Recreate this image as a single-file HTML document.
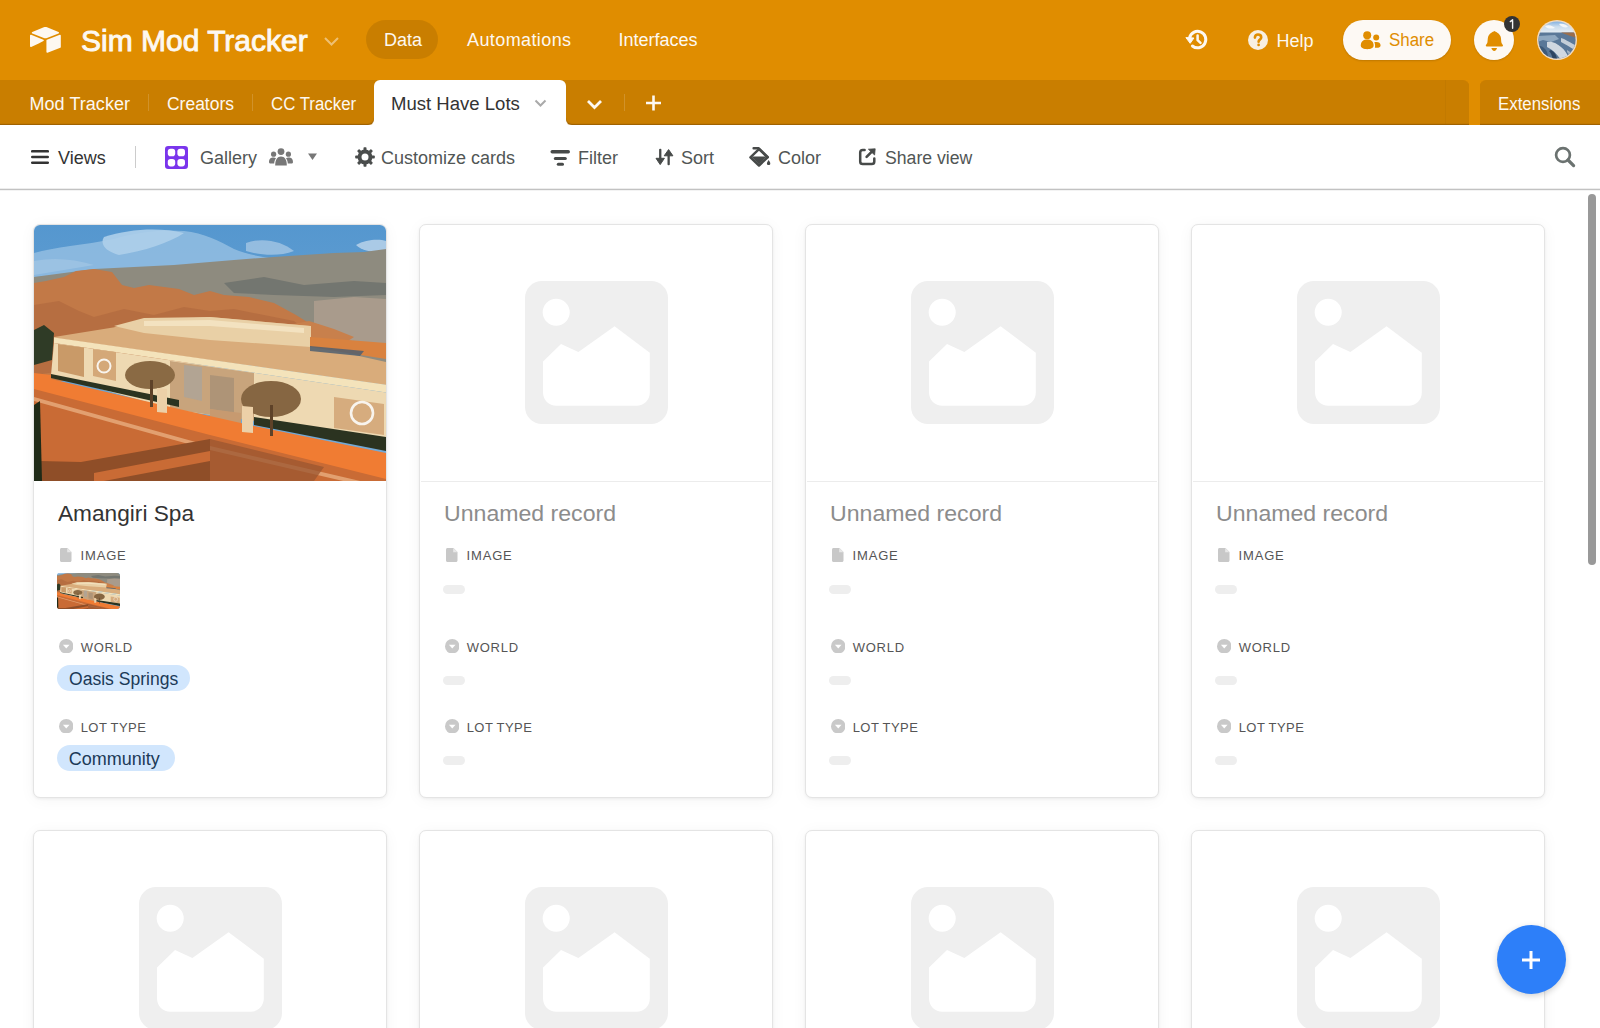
<!DOCTYPE html>
<html><head><meta charset="utf-8">
<style>
*{box-sizing:border-box;margin:0;padding:0}
html,body{width:1600px;height:1028px;overflow:hidden;background:#fff;font-family:"Liberation Sans",sans-serif}
.a{position:absolute}
.t{position:absolute;white-space:nowrap;line-height:1;font-family:"Liberation Sans",sans-serif}
.card{position:absolute;width:354px;background:#fff;border:1px solid #e4e4e4;border-radius:7px;box-shadow:0 1px 3px rgba(0,0,0,0.06),0 2px 16px rgba(0,0,0,0.045)}
</style></head><body>
<div class="a" style="left:0;top:0;width:1600px;height:80px;background:#e08d00"></div>
<svg class="a" style="left:30px;top:27px" width="31" height="26" viewBox="11 11 178 149">
<path fill="#fdf8f1" d="M90.039 12.368 24.079 39.66c-3.667 1.519-3.63 6.729.062 8.192l66.235 26.266a24.58 24.58 0 0 0 18.12 0l66.236-26.266c3.69-1.463 3.729-6.673.06-8.191l-65.958-27.293a24.58 24.58 0 0 0-18.795 0"/>
<path fill="#fdf8f1" d="M105.312 88.46v65.617c0 3.12 3.147 5.258 6.048 4.108l73.806-28.648a4.42 4.42 0 0 0 2.79-4.108V59.813c0-3.121-3.147-5.258-6.048-4.108l-73.806 28.648a4.42 4.42 0 0 0-2.79 4.108"/>
<path fill="#fdf8f1" d="m88.078 91.846-21.904 10.576-2.224 1.075-46.238 22.155c-2.93 1.414-6.672-.722-6.672-3.978V60.088c0-1.178.604-2.195 1.414-2.96a5 5 0 0 1 1.12-.84c1.104-.663 2.68-.84 4.02-.31L87.71 83.76c3.564 1.414 3.844 6.408.368 8.087"/>
</svg>
<div class="t" style="left:81px;top:25.60px;font-size:30px;color:#fdf8f1;font-weight:400;letter-spacing:0px;transform-origin:0 0;transform:scaleX(1.0);-webkit-text-stroke:0.9px #fdf8f1">Sim Mod Tracker</div>
<svg class="a" style="left:322px;top:34px" width="20" height="14"><polyline points="3,4 9.5,10.5 16,4" fill="none" stroke="rgba(255,255,255,0.45)" stroke-width="2"/></svg>
<div class="a" style="left:366px;top:20px;width:72px;height:39px;border-radius:20px;background:rgba(0,0,0,0.1)"></div>
<div class="t" style="left:384px;top:31.26px;font-size:18px;color:#fdf8f1;font-weight:400;letter-spacing:0px;">Data</div>
<div class="t" style="left:467px;top:31.26px;font-size:18px;color:#fdf8f1;font-weight:400;letter-spacing:0.4px;">Automations</div>
<div class="t" style="left:618.5px;top:31.26px;font-size:18px;color:#fdf8f1;font-weight:400;letter-spacing:0px;">Interfaces</div>
<svg class="a" style="left:1185px;top:28px" width="25" height="24" viewBox="0 0 25 24">
<path d="M7.44 17.97 A8.2 8.2 0 1 0 4.58 9.9" fill="none" stroke="#fdf8f1" stroke-width="3" stroke-linecap="round"/>
<path d="M0.9 9.6 L8.9 10 L5.2 15.3 Z" fill="#fdf8f1" stroke="#fdf8f1" stroke-width="1" stroke-linejoin="round"/>
<path d="M12.6 7.6 V12.2 L15.5 14.9" fill="none" stroke="#fdf8f1" stroke-width="2.5" stroke-linecap="round" stroke-linejoin="round"/>
</svg>
<svg class="a" style="left:1248px;top:29.5px" width="20" height="20" viewBox="0 0 20 20">
<circle cx="10" cy="10" r="10" fill="#f8efe1"/>
<path d="M6.9 7.6 C6.9 5.6 8.3 4.5 10 4.5 C11.8 4.5 13.2 5.7 13.2 7.4 C13.2 9.4 10.6 9.6 10.6 11.7" fill="none" stroke="#e08d00" stroke-width="2.6" stroke-linecap="round"/>
<circle cx="10.6" cy="14.9" r="1.35" fill="#e08d00"/>
</svg>
<div class="t" style="left:1276.5px;top:32.26px;font-size:18px;color:#fdf8f1;font-weight:400;letter-spacing:0px;">Help</div>
<div class="a" style="left:1343px;top:20px;width:108px;height:40px;border-radius:20px;background:#fdf9f4;box-shadow:0 1px 2px rgba(0,0,0,0.15)"></div>
<svg class="a" style="left:1360px;top:30px" width="22" height="20" viewBox="0 0 22 20">
<circle cx="7.2" cy="5.2" r="4" fill="#e08d00"/>
<path d="M0.8 15.6 C0.8 11.3 3.6 9.6 7.2 9.6 C10.8 9.6 13.6 11.3 13.6 15.6 C13.6 18.4 10.4 19.2 7.2 19.2 C4 19.2 0.8 18.4 0.8 15.6 Z" fill="#e08d00"/>
<circle cx="16.2" cy="7.6" r="3" fill="#e08d00"/>
<path d="M14.3 12.2 C17.6 11.3 20.6 12.4 20.6 15.2 C20.6 17 19 17.8 16.6 17.8 L14.9 17.8 C15.3 16 15.1 13.7 14.3 12.2 Z" fill="#e08d00"/>
</svg>
<div class="t" style="left:1389px;top:31.36px;font-size:18px;color:#e08d00;font-weight:400;letter-spacing:0px;transform-origin:0 0;transform:scaleX(0.94)">Share</div>
<div class="a" style="left:1474px;top:20px;width:40px;height:40px;border-radius:20px;background:#fdf9f4;box-shadow:0 1px 2px rgba(0,0,0,0.12)"></div>
<svg class="a" style="left:1484px;top:30px" width="20" height="22" viewBox="0 0 20 22">
<path d="M10.4 0.9 C12 2 15.5 3 16.6 6.5 C17.2 8.6 17.1 11 17.4 12.4 C17.8 13.8 19 14.6 19 15.4 C19 16.2 18.4 16.5 17.6 16.5 H3.2 C2.4 16.5 1.8 16.2 1.8 15.4 C1.8 14.6 3 13.8 3.4 12.4 C3.7 11 3.6 8.6 4.2 6.5 C5.3 3 8.8 2 10.4 0.9 Z" fill="#e08d00"/>
<path d="M7.4 18 H13 C12.6 19.8 11.6 20.9 10.2 20.9 C8.8 20.9 7.8 19.8 7.4 18 Z" fill="#e08d00"/>
</svg>
<svg class="a" style="left:1503.5px;top:16px" width="16" height="16" viewBox="0 0 16 16"><circle cx="8" cy="8" r="8" fill="#333"/><path d="M8.6 3.8 V12.2 M8.6 3.9 L6.3 5.6" fill="none" stroke="#f4f4f4" stroke-width="1.4" stroke-linecap="round" stroke-linejoin="round"/></svg>
<svg class="a" style="left:1537px;top:20px" width="40" height="40" viewBox="0 0 40 40">
<defs><clipPath id="av"><circle cx="20" cy="20" r="18.6"/></clipPath>
<linearGradient id="avsky" x1="0" y1="0" x2="0" y2="1"><stop offset="0" stop-color="#6fa3dc"/><stop offset="0.5" stop-color="#c9dced"/><stop offset="1" stop-color="#e8eef2"/></linearGradient></defs>
<circle cx="20" cy="20" r="20" fill="#f3dcc0"/>
<g clip-path="url(#av)">
<rect x="0" y="0" width="40" height="13" fill="url(#avsky)"/>
<path d="M8 6 C12 4 16 6 18 8 C14 9 10 9 8 6 Z M22 4 C26 3 30 5 31 7 C28 8 24 7 22 4 Z" fill="#f4f6f8"/>
<rect x="0" y="12.5" width="40" height="28" fill="#5a7898"/>
<path d="M24 12.5 L40 12.5 L40 18 L32 15.5 Z" fill="#9b6e4c"/>
<path d="M0 16 L18 15 L22 19 L14 22 L6 20 L0 22 Z" fill="#8fa8c0"/>
<path d="M10 22 C16 21 20 24 24 27 C28 30 30 34 33 40 L24 40 C20 34 16 30 10 27 Z" fill="#d0d8e0"/>
<path d="M24 18 C28 19 32 22 36 24 L40 26 L40 31 C34 28 28 24 24 22 Z" fill="#c4ced8"/>
<path d="M0 26 C4 25 8 28 10 32 L12 40 L0 40 Z" fill="#3e5a78"/>
<path d="M14 30 C18 32 20 36 20 40 L16 40 C15 36 14 33 12 31 Z" fill="#2c4462"/>
<path d="M30 30 C34 32 36 35 37 40 L34 40 C33 36 32 34 30 32 Z" fill="#9fb0c0"/>
</g>
</svg>
<div class="a" style="left:0;top:80px;width:1600px;height:45px;background:#e08d00"></div>
<div class="a" style="left:360px;top:110px;width:220px;height:15px;background:#fff"></div>
<div class="a" style="left:0;top:80px;width:374px;height:45px;background:#c97e00;border-bottom-right-radius:6px;box-shadow:inset 0 -1px 0 rgba(90,50,0,0.32),inset 0 -2px 0 rgba(90,50,0,0.06),0 1px 0 rgba(175,105,0,0.35)"></div>
<div class="a" style="left:566px;top:80px;width:903px;height:45px;background:#c97e00;border-radius:0 6px 0 6px;box-shadow:inset 0 -1px 0 rgba(90,50,0,0.32),inset 0 -2px 0 rgba(90,50,0,0.06),0 1px 0 rgba(175,105,0,0.35)"></div>
<div class="a" style="left:370px;top:80px;width:200px;height:12px;background:#c97e00"></div>
<div class="a" style="left:1480px;top:80px;width:120px;height:45px;background:#c97e00;border-top-left-radius:6px;box-shadow:inset 0 -1px 0 rgba(90,50,0,0.32),inset 0 -2px 0 rgba(90,50,0,0.06),0 1px 0 rgba(175,105,0,0.35)"></div>
<div class="a" style="left:1445px;top:80px;width:1px;height:44px;background:rgba(0,0,0,0.03)"></div>
<div class="t" style="left:29.5px;top:95.36px;font-size:18px;color:#fdf8f1;font-weight:400;letter-spacing:0.05px;">Mod Tracker</div>
<div class="a" style="left:148px;top:94px;width:1px;height:17px;background:rgba(255,255,255,0.16)"></div>
<div class="t" style="left:166.7px;top:95.36px;font-size:18px;color:#fdf8f1;font-weight:400;letter-spacing:0px;transform-origin:0 0;transform:scaleX(0.97)">Creators</div>
<div class="a" style="left:252px;top:94px;width:1px;height:17px;background:rgba(255,255,255,0.16)"></div>
<div class="t" style="left:270.6px;top:95.36px;font-size:18px;color:#fdf8f1;font-weight:400;letter-spacing:0px;transform-origin:0 0;transform:scaleX(0.935)">CC Tracker</div>
<div class="a" style="left:374px;top:80px;width:192px;height:46px;background:#fff;border-radius:6px 6px 0 0"></div>
<div class="t" style="left:391px;top:95.26px;font-size:18px;color:#333333;font-weight:400;letter-spacing:0px;transform-origin:0 0;transform:scaleX(1.03)">Must Have Lots</div>
<svg class="a" style="left:532px;top:96px" width="17" height="14"><polyline points="3.5,4.5 8.5,9.5 13.5,4.5" fill="none" stroke="#aaaaaa" stroke-width="2"/></svg>
<svg class="a" style="left:584px;top:96px" width="21" height="16"><polyline points="4,5 10.5,11.5 17,5" fill="none" stroke="#fdf8f1" stroke-width="2.8"/></svg>
<div class="a" style="left:624px;top:94px;width:1px;height:17px;background:rgba(255,255,255,0.16)"></div>
<svg class="a" style="left:644px;top:94px" width="19" height="18"><path d="M9.5 1.5 V16.5 M2 9 H17" fill="none" stroke="#fdf8f1" stroke-width="2.6"/></svg>
<div class="t" style="left:1497.6px;top:95.36px;font-size:18px;color:#fdf8f1;font-weight:400;letter-spacing:0px;transform-origin:0 0;transform:scaleX(0.935)">Extensions</div>
<div class="a" style="left:0;top:125px;width:1600px;height:63px;background:#fff"></div>
<div class="a" style="left:0;top:188px;width:1600px;height:1px;background:#ededed"></div>
<div class="a" style="left:0;top:189px;width:1600px;height:1px;background:#c2c2c2"></div>
<svg class="a" style="left:31px;top:150px" width="18" height="14"><rect x="0" y="0" width="18" height="2.6" rx="1.2" fill="#333"/><rect x="0" y="5.7" width="18" height="2.6" rx="1.2" fill="#333"/><rect x="0" y="11.4" width="18" height="2.6" rx="1.2" fill="#333"/></svg>
<div class="t" style="left:58px;top:149.26px;font-size:18px;color:#333333;font-weight:400;letter-spacing:0px;">Views</div>
<div class="a" style="left:134.5px;top:146px;width:1.5px;height:22px;background:#cccccc"></div>
<svg class="a" style="left:165px;top:145.5px" width="23" height="23" viewBox="0 0 23 23">
<rect x="0" y="0" width="23" height="23" rx="3.2" fill="#7a35ec"/>
<rect x="2.8" y="2.8" width="7.4" height="7.4" rx="2.8" fill="#fff"/><rect x="12.4" y="2.8" width="7.6" height="7.4" rx="2.8" fill="#fff"/>
<rect x="2.8" y="12.9" width="7.4" height="7.5" rx="2.8" fill="#fff"/><rect x="12.4" y="12.9" width="7.6" height="7.5" rx="2.8" fill="#fff"/>
</svg>
<div class="t" style="left:200px;top:149.26px;font-size:18px;color:#515655;font-weight:400;letter-spacing:0px;">Gallery</div>
<svg class="a" style="left:269px;top:148px" width="24" height="18" viewBox="0 0 24 18">
<circle cx="12" cy="3.6" r="3.4" fill="#777"/>
<circle cx="4.6" cy="6.2" r="2.6" fill="#777"/><circle cx="19.4" cy="6.2" r="2.6" fill="#777"/>
<path d="M6.2 17.6 C6.2 11.4 8.4 8.6 12 8.6 C15.6 8.6 17.8 11.4 17.8 17.6 Z" fill="#777"/>
<path d="M0 14.6 C0 10.8 1.8 9.6 4.6 9.6 C5.6 9.6 6.4 9.8 7 10.2 C5.8 11.6 5.3 13.6 5.2 15.4 L0.8 15.4 Z" fill="#777"/>
<path d="M24 14.6 C24 10.8 22.2 9.6 19.4 9.6 C18.4 9.6 17.6 9.8 17 10.2 C18.2 11.6 18.7 13.6 18.8 15.4 L23.2 15.4 Z" fill="#777"/>
</svg>
<svg class="a" style="left:307px;top:152px" width="11" height="9"><path d="M1 1.5 H10 L5.5 8 Z" fill="#777"/></svg>
<svg class="a" style="left:354.5px;top:146.5px" width="20" height="20" viewBox="0 0 20 20">
<g fill="#4a4d4c" transform="translate(10 10)">
<circle r="7.4"/>
<rect x="-1.5" y="-9.8" width="3" height="19.6" rx="0.8"/>
<rect x="-1.5" y="-9.8" width="3" height="19.6" rx="0.8" transform="rotate(45)"/>
<rect x="-1.5" y="-9.8" width="3" height="19.6" rx="0.8" transform="rotate(90)"/>
<rect x="-1.5" y="-9.8" width="3" height="19.6" rx="0.8" transform="rotate(135)"/>
</g>
<circle cx="10" cy="10" r="3.5" fill="#fff"/>
</svg>
<div class="t" style="left:381px;top:149.26px;font-size:18px;color:#515655;font-weight:400;letter-spacing:0px;">Customize cards</div>
<svg class="a" style="left:548px;top:147px" width="25" height="21" viewBox="548 147 25 21">
<rect x="550.5" y="150.1" width="19.5" height="3.4" rx="1.7" fill="#474a49"/>
<rect x="553.8" y="157" width="13" height="3" rx="1.5" fill="#474a49"/>
<rect x="556.8" y="162.8" width="7.2" height="3" rx="1.5" fill="#474a49"/>
</svg>
<div class="t" style="left:578px;top:149.26px;font-size:18px;color:#515655;font-weight:400;letter-spacing:0px;">Filter</div>
<svg class="a" style="left:650px;top:146px" width="26" height="22" viewBox="650 146 26 22">
<rect x="659.1" y="148.8" width="2.3" height="11" rx="1" fill="#474a49"/>
<path d="M656 158.3 L664.4 158.3 L660.2 164.6 Z" fill="#474a49" stroke="#474a49" stroke-width="1" stroke-linejoin="round"/>
<rect x="667.5" y="154" width="2.3" height="11.3" rx="1" fill="#474a49"/>
<path d="M664.2 155.8 L672.9 155.8 L668.6 149.6 Z" fill="#474a49" stroke="#474a49" stroke-width="1" stroke-linejoin="round"/>
</svg>
<div class="t" style="left:681px;top:149.26px;font-size:18px;color:#515655;font-weight:400;letter-spacing:0px;">Sort</div>
<svg class="a" style="left:745px;top:142px" width="30" height="28" viewBox="745 142 30 28">
<path d="M759 149.2 L767.6 157.3 L759 165.6 L750.4 157.3 Z" fill="none" stroke="#474a49" stroke-width="2.4" stroke-linejoin="round"/>
<path d="M751.2 156.6 L766.8 156.6 L759 164.6 Z" fill="#474a49"/>
<path d="M753.6 148.3 H758.8 L767.8 157.2" fill="none" stroke="#474a49" stroke-width="2.4" stroke-linecap="round" stroke-linejoin="round"/>
<path d="M768.6 160 C769.6 161.4 770.3 162.5 770.3 163.4 C770.3 164.4 769.5 165.1 768.6 165.1 C767.7 165.1 766.9 164.4 766.9 163.4 C766.9 162.5 767.6 161.4 768.6 160 Z" fill="#474a49"/>
</svg>
<div class="t" style="left:778px;top:149.26px;font-size:18px;color:#515655;font-weight:400;letter-spacing:0px;">Color</div>
<svg class="a" style="left:855px;top:142px" width="27" height="28" viewBox="855 142 27 28">
<path d="M864.6 149.9 H862.8 C861.3 149.9 860.2 151 860.2 152.5 V161.5 C860.2 163 861.3 164.1 862.8 164.1 H871.7 C873.2 164.1 874.3 163 874.3 161.5 V158.4" fill="none" stroke="#474a49" stroke-width="2.5" stroke-linecap="round"/>
<path d="M866.6 156.8 L872.6 150.8" stroke="#474a49" stroke-width="2.6" stroke-linecap="round"/>
<path d="M868.4 149.2 L875.2 148.8 L874.6 155 Z" fill="#474a49" stroke="#474a49" stroke-width="0.8" stroke-linejoin="round"/>
</svg>
<div class="t" style="left:885px;top:149.26px;font-size:18px;color:#515655;font-weight:400;letter-spacing:0px;transform-origin:0 0;transform:scaleX(0.98)">Share view</div>
<svg class="a" style="left:1552px;top:144px" width="25" height="25" viewBox="0 0 25 25">
<circle cx="11" cy="11" r="6.9" fill="none" stroke="#6b7270" stroke-width="2.7"/>
<path d="M16 16 L21.6 21.6" stroke="#6b7270" stroke-width="3.2" stroke-linecap="round"/>
</svg>
<div class="a" style="left:0;top:190px;width:1600px;height:838px;background:#ffffff"></div>
<div class="a" style="left:0;top:190px;width:1600px;height:1px;background:#f3f3f3"></div>
<div class="card" style="left:33px;top:224px;height:574px"></div>
<div class="a" style="left:34px;top:225px;width:352px;height:256px;border-radius:6px 6px 0 0;overflow:hidden"><svg width="352" height="256" viewBox="0 0 352 256" preserveAspectRatio="none" style="display:block">
<defs>
<linearGradient id="sky" x1="0" y1="0" x2="0" y2="1"><stop offset="0" stop-color="#5597cf"/><stop offset="1" stop-color="#78acd6"/></linearGradient>
</defs>
<rect width="352" height="256" fill="url(#sky)"/>
<path d="M0 28 C20 22 50 20 80 14 C100 8 125 4 150 6 C170 8 185 16 200 24 C215 30 235 34 250 34 L260 40 L0 52 Z" fill="#8fbbe0" opacity="0.9"/>
<path d="M70 12 C95 4 125 2 150 8 C135 18 110 26 85 30 C70 26 66 18 70 12 Z" fill="#aecfea" opacity="0.9"/>
<path d="M0 36 C20 32 40 34 60 40 L0 50 Z" fill="#9fc4e4" opacity="0.8"/>
<path d="M212 18 C228 12 248 16 260 26 C245 32 225 30 212 26 Z" fill="#a4c6e4" opacity="0.8"/>
<path d="M322 20 C332 14 346 14 352 16 L352 27 C340 28 328 26 322 20 Z" fill="#b8d2ea" opacity="0.85"/>
<path d="M0 52 L30 48 L60 44 L100 42 L140 40 L176 37 L200 35 L240 32 L270 30 L300 28 L330 27 L352 24 L352 140 L0 140 Z" fill="#8e8b7f"/>
<path d="M190 58 L230 52 L270 60 L320 56 L352 58 L352 70 L300 72 L240 70 L200 68 Z" fill="#737670"/>
<path d="M280 76 L320 72 L352 74 L352 130 L280 130 Z" fill="#a99b8c"/>
<path d="M0 58 L12 56 L30 52 L42 46 L60 44 L78 47 L88 60 L100 63 L115 60 L130 62 L145 64 L160 70 L176 66 L190 70 L215 72 L240 78 L262 90 L278 100 L290 118 L0 160 Z" fill="#c27947"/>
<path d="M0 80 L25 76 L45 86 L60 92 L90 84 L120 90 L150 82 L176 86 L200 84 L230 90 L260 96 L280 112 L0 150 Z" fill="#b06a3e" opacity="0.7"/>
<path d="M255 100 L275 96 L300 104 L320 112 L300 125 L255 125 Z" fill="#c8804c"/>
<path d="M0 105 L10 100 L20 108 L18 135 L0 140 Z" fill="#2f3b26"/>
<path d="M20 112 L79 102.5 L110 96 L176 92 L276 101 L276 120 L352 137 L352 160 L20 113 Z" fill="#d9ac7b"/>
<path d="M80 101 L110 93 L176 92 L277 101 L277 122 L176 115 L110 108 Z" fill="#e9d0a6"/>
<path d="M110 96 L176 95 L270 103 L270 108 L176 101 L110 101 Z" fill="#f3e2c0"/>
<path d="M276 112 L352 118 L352 134 L276 122 Z" fill="#d9823f"/><path d="M276 121 L330 126 L326 131 L276 126 Z" fill="#4f5f70" opacity="0.85"/>
<path d="M20 112.4 L352 159.7 L352 167.4 L20 117.9 Z" fill="#f4e3bb"/>
<path d="M20 117.9 L352 167.4 L352 215 L220 195 L145 186 L17 150 Z" fill="#eed9b2"/>
<path d="M24 119 L50 122.5 L50 152 L24 146 Z" fill="#c99a68"/>
<path d="M59 124 L82 127 L82 156 L59 151 Z" fill="#d4a878"/>
<path d="M136 136 L220 148 L220 196 L136 184 Z" fill="#c8a47c"/><path d="M150 140 L168 142 L168 176 L150 172 Z" fill="#a8a49c" opacity="0.7"/><path d="M176 150 L200 153 L200 188 L176 184 Z" fill="#9c8a74" opacity="0.6"/>
<path d="M300 172 L350 179 L350 210 L300 203 Z" fill="#d6ac7e"/>
<path d="M176 184 L207 188 L207 210 L176 206 Z" fill="#c79a70"/>
<path d="M17 149 L145 175 L145 182 L17 153 Z" fill="#2b3320"/>
<path d="M220 192 L352 212 L352 226 L220 200 Z" fill="#2b3320"/>
<path d="M0 148 L17 150 L17 154 L145 184 L220 201 L352 228 L352 256 L0 256 Z" fill="#f07c33"/>
<path d="M0 164 L176 210 L352 254 L352 256 L0 256 Z" fill="#c96b35"/>
<path d="M0 172 L176 221 L352 262 L352 266 L176 225 L0 176 Z" fill="#e2a070"/>
<path d="M6 236 L47 237 L176 214 L176 256 L6 256 Z" fill="#8f4e28"/>
<path d="M60 248 L176 226 L176 236 L70 256 L60 256 Z" fill="#c96b35"/>
<path d="M176 214 L290 242 L280 256 L176 256 Z" fill="#9a5630" opacity="0.75"/>
<path d="M0 180 L6 176 L8 256 L0 256 Z" fill="#1f2a17"/>
<ellipse cx="116" cy="150" rx="25" ry="14" fill="#8a6a44"/>
<path d="M116 155 L119 155 L119 182 L116 182 Z" fill="#5e4228"/>
<ellipse cx="237" cy="174" rx="30" ry="18" fill="#866642"/>
<path d="M236 180 L239 180 L239 211 L236 211 Z" fill="#5e4228"/>
<path d="M123 163 L133 164 L133 188 L123 187 Z" fill="#ecd0a8"/>
<path d="M208 181 L219 182 L219 208 L208 207 Z" fill="#ecd0a8"/>
<circle cx="70" cy="141" r="6.5" fill="none" stroke="#f8f4ee" stroke-width="2"/>
<circle cx="328" cy="188" r="11" fill="none" stroke="#f8f4ee" stroke-width="2.6"/>
</svg></div>
<div class="t" style="left:57.5px;top:502.58px;font-size:22px;color:#333333;font-weight:400;letter-spacing:0px;transform-origin:0 0;transform:scaleX(1.03)">Amangiri Spa</div>
<svg class="a" style="left:60px;top:547.5px" width="12" height="14" viewBox="0 0 12 14"><path d="M1.5 0 H7.5 L11.5 4 V12.5 C11.5 13.3 10.8 14 10 14 H1.5 C0.7 14 0 13.3 0 12.5 V1.5 C0 0.7 0.7 0 1.5 0 Z" fill="#c8c8c8"/><path d="M7.2 0 V4.3 H11.5" fill="#e8e8e8"/></svg>
<div class="t" style="left:80.5px;top:549.00px;font-size:13px;color:#555555;font-weight:400;letter-spacing:0.85px;">IMAGE</div>
<svg class="a" style="left:58.6px;top:638.7px" width="14.5" height="14.5" viewBox="0 0 14 14"><circle cx="7" cy="7" r="7" fill="#c9c9c9"/><path d="M3.8 5.6 H10.2 L7 9.2 Z" fill="#fff"/></svg>
<div class="t" style="left:80.7px;top:640.70px;font-size:13px;color:#555555;font-weight:400;letter-spacing:0.75px;">WORLD</div>
<svg class="a" style="left:58.6px;top:718.7px" width="14.5" height="14.5" viewBox="0 0 14 14"><circle cx="7" cy="7" r="7" fill="#c9c9c9"/><path d="M3.8 5.6 H10.2 L7 9.2 Z" fill="#fff"/></svg>
<div class="t" style="left:80.7px;top:720.60px;font-size:13px;color:#555555;font-weight:400;letter-spacing:0.45px;word-spacing:-0.3px">LOT TYPE</div>
<div class="a" style="left:57px;top:573.4px;width:63px;height:35.4px;border-radius:3px;overflow:hidden"><svg width="63" height="35.4" viewBox="0 40 352 200" preserveAspectRatio="xMidYMid slice" style="display:block">
<defs>
<linearGradient id="sky2" x1="0" y1="0" x2="0" y2="1"><stop offset="0" stop-color="#5597cf"/><stop offset="1" stop-color="#78acd6"/></linearGradient>
</defs>
<rect width="352" height="256" fill="url(#sky2)"/>
<path d="M0 28 C20 22 50 20 80 14 C100 8 125 4 150 6 C170 8 185 16 200 24 C215 30 235 34 250 34 L260 40 L0 52 Z" fill="#8fbbe0" opacity="0.9"/>
<path d="M70 12 C95 4 125 2 150 8 C135 18 110 26 85 30 C70 26 66 18 70 12 Z" fill="#aecfea" opacity="0.9"/>
<path d="M0 36 C20 32 40 34 60 40 L0 50 Z" fill="#9fc4e4" opacity="0.8"/>
<path d="M212 18 C228 12 248 16 260 26 C245 32 225 30 212 26 Z" fill="#a4c6e4" opacity="0.8"/>
<path d="M322 20 C332 14 346 14 352 16 L352 27 C340 28 328 26 322 20 Z" fill="#b8d2ea" opacity="0.85"/>
<path d="M0 52 L30 48 L60 44 L100 42 L140 40 L176 37 L200 35 L240 32 L270 30 L300 28 L330 27 L352 24 L352 140 L0 140 Z" fill="#8e8b7f"/>
<path d="M190 58 L230 52 L270 60 L320 56 L352 58 L352 70 L300 72 L240 70 L200 68 Z" fill="#737670"/>
<path d="M280 76 L320 72 L352 74 L352 130 L280 130 Z" fill="#a99b8c"/>
<path d="M0 58 L12 56 L30 52 L42 46 L60 44 L78 47 L88 60 L100 63 L115 60 L130 62 L145 64 L160 70 L176 66 L190 70 L215 72 L240 78 L262 90 L278 100 L290 118 L0 160 Z" fill="#c27947"/>
<path d="M0 80 L25 76 L45 86 L60 92 L90 84 L120 90 L150 82 L176 86 L200 84 L230 90 L260 96 L280 112 L0 150 Z" fill="#b06a3e" opacity="0.7"/>
<path d="M255 100 L275 96 L300 104 L320 112 L300 125 L255 125 Z" fill="#c8804c"/>
<path d="M0 105 L10 100 L20 108 L18 135 L0 140 Z" fill="#2f3b26"/>
<path d="M20 112 L79 102.5 L110 96 L176 92 L276 101 L276 120 L352 137 L352 160 L20 113 Z" fill="#d9ac7b"/>
<path d="M80 101 L110 93 L176 92 L277 101 L277 122 L176 115 L110 108 Z" fill="#e9d0a6"/>
<path d="M110 96 L176 95 L270 103 L270 108 L176 101 L110 101 Z" fill="#f3e2c0"/>
<path d="M276 112 L352 118 L352 134 L276 122 Z" fill="#d9823f"/><path d="M276 121 L330 126 L326 131 L276 126 Z" fill="#4f5f70" opacity="0.85"/>
<path d="M20 112.4 L352 159.7 L352 167.4 L20 117.9 Z" fill="#f4e3bb"/>
<path d="M20 117.9 L352 167.4 L352 215 L220 195 L145 186 L17 150 Z" fill="#eed9b2"/>
<path d="M24 119 L50 122.5 L50 152 L24 146 Z" fill="#c99a68"/>
<path d="M59 124 L82 127 L82 156 L59 151 Z" fill="#d4a878"/>
<path d="M136 136 L220 148 L220 196 L136 184 Z" fill="#c8a47c"/><path d="M150 140 L168 142 L168 176 L150 172 Z" fill="#a8a49c" opacity="0.7"/><path d="M176 150 L200 153 L200 188 L176 184 Z" fill="#9c8a74" opacity="0.6"/>
<path d="M300 172 L350 179 L350 210 L300 203 Z" fill="#d6ac7e"/>
<path d="M176 184 L207 188 L207 210 L176 206 Z" fill="#c79a70"/>
<path d="M17 149 L145 175 L145 182 L17 153 Z" fill="#2b3320"/>
<path d="M220 192 L352 212 L352 226 L220 200 Z" fill="#2b3320"/>
<path d="M0 148 L17 150 L17 154 L145 184 L220 201 L352 228 L352 256 L0 256 Z" fill="#f07c33"/>
<path d="M0 164 L176 210 L352 254 L352 256 L0 256 Z" fill="#c96b35"/>
<path d="M0 172 L176 221 L352 262 L352 266 L176 225 L0 176 Z" fill="#e2a070"/>
<path d="M6 236 L47 237 L176 214 L176 256 L6 256 Z" fill="#8f4e28"/>
<path d="M60 248 L176 226 L176 236 L70 256 L60 256 Z" fill="#c96b35"/>
<path d="M176 214 L290 242 L280 256 L176 256 Z" fill="#9a5630" opacity="0.75"/>
<path d="M0 180 L6 176 L8 256 L0 256 Z" fill="#1f2a17"/>
<ellipse cx="116" cy="150" rx="25" ry="14" fill="#8a6a44"/>
<path d="M116 155 L119 155 L119 182 L116 182 Z" fill="#5e4228"/>
<ellipse cx="237" cy="174" rx="30" ry="18" fill="#866642"/>
<path d="M236 180 L239 180 L239 211 L236 211 Z" fill="#5e4228"/>
<path d="M123 163 L133 164 L133 188 L123 187 Z" fill="#ecd0a8"/>
<path d="M208 181 L219 182 L219 208 L208 207 Z" fill="#ecd0a8"/>
<circle cx="70" cy="141" r="6.5" fill="none" stroke="#f8f4ee" stroke-width="2"/>
<circle cx="328" cy="188" r="11" fill="none" stroke="#f8f4ee" stroke-width="2.6"/>
</svg></div>
<div class="a" style="left:57px;top:665px;width:133px;height:26px;border-radius:13px;background:#d1e6fd"></div>
<div class="t" style="left:68.8px;top:670.36px;font-size:18px;color:#1c3a57;font-weight:400;letter-spacing:0px;transform-origin:0 0;transform:scaleX(0.975)">Oasis Springs</div>
<div class="a" style="left:57px;top:745px;width:118px;height:26px;border-radius:13px;background:#d1e6fd"></div>
<div class="t" style="left:68.8px;top:750.36px;font-size:18px;color:#1c3a57;font-weight:400;letter-spacing:0px;">Community</div>
<div class="card" style="left:419px;top:224px;height:574px"></div>
<svg class="a" style="left:525px;top:281px" width="143" height="143" viewBox="0 0 143 143">
<rect width="143" height="143" rx="17" fill="#efefef"/>
<circle cx="31.2" cy="31.2" r="13.5" fill="#fff"/>
<path d="M18 80.4 L36 62.9 L53.4 70.9 L89.6 45.2 L124.8 71.7 V111.5 C124.8 118.8 119 124.8 111.5 124.8 H31.3 C24 124.8 18 118.8 18 111.5 Z" fill="#fff"/>
</svg>
<div class="a" style="left:421px;top:480.5px;width:350px;height:1px;background:#ececec"></div>
<div class="t" style="left:444.2px;top:502.58px;font-size:22px;color:#8c8c8c;font-weight:400;letter-spacing:0px;transform-origin:0 0;transform:scaleX(1.05)">Unnamed record</div>
<svg class="a" style="left:446px;top:547.5px" width="12" height="14" viewBox="0 0 12 14"><path d="M1.5 0 H7.5 L11.5 4 V12.5 C11.5 13.3 10.8 14 10 14 H1.5 C0.7 14 0 13.3 0 12.5 V1.5 C0 0.7 0.7 0 1.5 0 Z" fill="#c8c8c8"/><path d="M7.2 0 V4.3 H11.5" fill="#e8e8e8"/></svg>
<div class="t" style="left:466.5px;top:549.00px;font-size:13px;color:#555555;font-weight:400;letter-spacing:0.85px;">IMAGE</div>
<svg class="a" style="left:444.6px;top:638.7px" width="14.5" height="14.5" viewBox="0 0 14 14"><circle cx="7" cy="7" r="7" fill="#c9c9c9"/><path d="M3.8 5.6 H10.2 L7 9.2 Z" fill="#fff"/></svg>
<div class="t" style="left:466.7px;top:640.70px;font-size:13px;color:#555555;font-weight:400;letter-spacing:0.75px;">WORLD</div>
<svg class="a" style="left:444.6px;top:718.7px" width="14.5" height="14.5" viewBox="0 0 14 14"><circle cx="7" cy="7" r="7" fill="#c9c9c9"/><path d="M3.8 5.6 H10.2 L7 9.2 Z" fill="#fff"/></svg>
<div class="t" style="left:466.7px;top:720.60px;font-size:13px;color:#555555;font-weight:400;letter-spacing:0.45px;word-spacing:-0.3px">LOT TYPE</div>
<div class="a" style="left:443px;top:584.7px;width:22px;height:9px;border-radius:4.5px;background:#eeeeee"></div>
<div class="a" style="left:443px;top:676px;width:22px;height:9px;border-radius:4.5px;background:#eeeeee"></div>
<div class="a" style="left:443px;top:756.3px;width:22px;height:9px;border-radius:4.5px;background:#eeeeee"></div>
<div class="card" style="left:805px;top:224px;height:574px"></div>
<svg class="a" style="left:911px;top:281px" width="143" height="143" viewBox="0 0 143 143">
<rect width="143" height="143" rx="17" fill="#efefef"/>
<circle cx="31.2" cy="31.2" r="13.5" fill="#fff"/>
<path d="M18 80.4 L36 62.9 L53.4 70.9 L89.6 45.2 L124.8 71.7 V111.5 C124.8 118.8 119 124.8 111.5 124.8 H31.3 C24 124.8 18 118.8 18 111.5 Z" fill="#fff"/>
</svg>
<div class="a" style="left:807px;top:480.5px;width:350px;height:1px;background:#ececec"></div>
<div class="t" style="left:830.2px;top:502.58px;font-size:22px;color:#8c8c8c;font-weight:400;letter-spacing:0px;transform-origin:0 0;transform:scaleX(1.05)">Unnamed record</div>
<svg class="a" style="left:832px;top:547.5px" width="12" height="14" viewBox="0 0 12 14"><path d="M1.5 0 H7.5 L11.5 4 V12.5 C11.5 13.3 10.8 14 10 14 H1.5 C0.7 14 0 13.3 0 12.5 V1.5 C0 0.7 0.7 0 1.5 0 Z" fill="#c8c8c8"/><path d="M7.2 0 V4.3 H11.5" fill="#e8e8e8"/></svg>
<div class="t" style="left:852.5px;top:549.00px;font-size:13px;color:#555555;font-weight:400;letter-spacing:0.85px;">IMAGE</div>
<svg class="a" style="left:830.6px;top:638.7px" width="14.5" height="14.5" viewBox="0 0 14 14"><circle cx="7" cy="7" r="7" fill="#c9c9c9"/><path d="M3.8 5.6 H10.2 L7 9.2 Z" fill="#fff"/></svg>
<div class="t" style="left:852.7px;top:640.70px;font-size:13px;color:#555555;font-weight:400;letter-spacing:0.75px;">WORLD</div>
<svg class="a" style="left:830.6px;top:718.7px" width="14.5" height="14.5" viewBox="0 0 14 14"><circle cx="7" cy="7" r="7" fill="#c9c9c9"/><path d="M3.8 5.6 H10.2 L7 9.2 Z" fill="#fff"/></svg>
<div class="t" style="left:852.7px;top:720.60px;font-size:13px;color:#555555;font-weight:400;letter-spacing:0.45px;word-spacing:-0.3px">LOT TYPE</div>
<div class="a" style="left:829px;top:584.7px;width:22px;height:9px;border-radius:4.5px;background:#eeeeee"></div>
<div class="a" style="left:829px;top:676px;width:22px;height:9px;border-radius:4.5px;background:#eeeeee"></div>
<div class="a" style="left:829px;top:756.3px;width:22px;height:9px;border-radius:4.5px;background:#eeeeee"></div>
<div class="card" style="left:1191px;top:224px;height:574px"></div>
<svg class="a" style="left:1297px;top:281px" width="143" height="143" viewBox="0 0 143 143">
<rect width="143" height="143" rx="17" fill="#efefef"/>
<circle cx="31.2" cy="31.2" r="13.5" fill="#fff"/>
<path d="M18 80.4 L36 62.9 L53.4 70.9 L89.6 45.2 L124.8 71.7 V111.5 C124.8 118.8 119 124.8 111.5 124.8 H31.3 C24 124.8 18 118.8 18 111.5 Z" fill="#fff"/>
</svg>
<div class="a" style="left:1193px;top:480.5px;width:350px;height:1px;background:#ececec"></div>
<div class="t" style="left:1216.2px;top:502.58px;font-size:22px;color:#8c8c8c;font-weight:400;letter-spacing:0px;transform-origin:0 0;transform:scaleX(1.05)">Unnamed record</div>
<svg class="a" style="left:1218px;top:547.5px" width="12" height="14" viewBox="0 0 12 14"><path d="M1.5 0 H7.5 L11.5 4 V12.5 C11.5 13.3 10.8 14 10 14 H1.5 C0.7 14 0 13.3 0 12.5 V1.5 C0 0.7 0.7 0 1.5 0 Z" fill="#c8c8c8"/><path d="M7.2 0 V4.3 H11.5" fill="#e8e8e8"/></svg>
<div class="t" style="left:1238.5px;top:549.00px;font-size:13px;color:#555555;font-weight:400;letter-spacing:0.85px;">IMAGE</div>
<svg class="a" style="left:1216.6px;top:638.7px" width="14.5" height="14.5" viewBox="0 0 14 14"><circle cx="7" cy="7" r="7" fill="#c9c9c9"/><path d="M3.8 5.6 H10.2 L7 9.2 Z" fill="#fff"/></svg>
<div class="t" style="left:1238.7px;top:640.70px;font-size:13px;color:#555555;font-weight:400;letter-spacing:0.75px;">WORLD</div>
<svg class="a" style="left:1216.6px;top:718.7px" width="14.5" height="14.5" viewBox="0 0 14 14"><circle cx="7" cy="7" r="7" fill="#c9c9c9"/><path d="M3.8 5.6 H10.2 L7 9.2 Z" fill="#fff"/></svg>
<div class="t" style="left:1238.7px;top:720.60px;font-size:13px;color:#555555;font-weight:400;letter-spacing:0.45px;word-spacing:-0.3px">LOT TYPE</div>
<div class="a" style="left:1215px;top:584.7px;width:22px;height:9px;border-radius:4.5px;background:#eeeeee"></div>
<div class="a" style="left:1215px;top:676px;width:22px;height:9px;border-radius:4.5px;background:#eeeeee"></div>
<div class="a" style="left:1215px;top:756.3px;width:22px;height:9px;border-radius:4.5px;background:#eeeeee"></div>
<div class="card" style="left:33px;top:830px;height:400px"></div>
<svg class="a" style="left:139px;top:886.5px" width="143" height="143" viewBox="0 0 143 143">
<rect width="143" height="143" rx="17" fill="#efefef"/>
<circle cx="31.2" cy="31.2" r="13.5" fill="#fff"/>
<path d="M18 80.4 L36 62.9 L53.4 70.9 L89.6 45.2 L124.8 71.7 V111.5 C124.8 118.8 119 124.8 111.5 124.8 H31.3 C24 124.8 18 118.8 18 111.5 Z" fill="#fff"/>
</svg>
<div class="card" style="left:419px;top:830px;height:400px"></div>
<svg class="a" style="left:525px;top:886.5px" width="143" height="143" viewBox="0 0 143 143">
<rect width="143" height="143" rx="17" fill="#efefef"/>
<circle cx="31.2" cy="31.2" r="13.5" fill="#fff"/>
<path d="M18 80.4 L36 62.9 L53.4 70.9 L89.6 45.2 L124.8 71.7 V111.5 C124.8 118.8 119 124.8 111.5 124.8 H31.3 C24 124.8 18 118.8 18 111.5 Z" fill="#fff"/>
</svg>
<div class="card" style="left:805px;top:830px;height:400px"></div>
<svg class="a" style="left:911px;top:886.5px" width="143" height="143" viewBox="0 0 143 143">
<rect width="143" height="143" rx="17" fill="#efefef"/>
<circle cx="31.2" cy="31.2" r="13.5" fill="#fff"/>
<path d="M18 80.4 L36 62.9 L53.4 70.9 L89.6 45.2 L124.8 71.7 V111.5 C124.8 118.8 119 124.8 111.5 124.8 H31.3 C24 124.8 18 118.8 18 111.5 Z" fill="#fff"/>
</svg>
<div class="card" style="left:1191px;top:830px;height:400px"></div>
<svg class="a" style="left:1297px;top:886.5px" width="143" height="143" viewBox="0 0 143 143">
<rect width="143" height="143" rx="17" fill="#efefef"/>
<circle cx="31.2" cy="31.2" r="13.5" fill="#fff"/>
<path d="M18 80.4 L36 62.9 L53.4 70.9 L89.6 45.2 L124.8 71.7 V111.5 C124.8 118.8 119 124.8 111.5 124.8 H31.3 C24 124.8 18 118.8 18 111.5 Z" fill="#fff"/>
</svg>
<div class="a" style="left:1587.5px;top:194px;width:8.5px;height:371px;border-radius:4.25px;background:#999999"></div>
<div class="a" style="left:1496.5px;top:925px;width:69px;height:69px;border-radius:35px;background:#2d7ff9;box-shadow:0 2px 6px rgba(0,0,0,0.18)"></div>
<svg class="a" style="left:1519px;top:948px" width="24" height="24"><path d="M12 3 V21 M3 12 H21" stroke="#fff" stroke-width="3"/></svg>
</body></html>
